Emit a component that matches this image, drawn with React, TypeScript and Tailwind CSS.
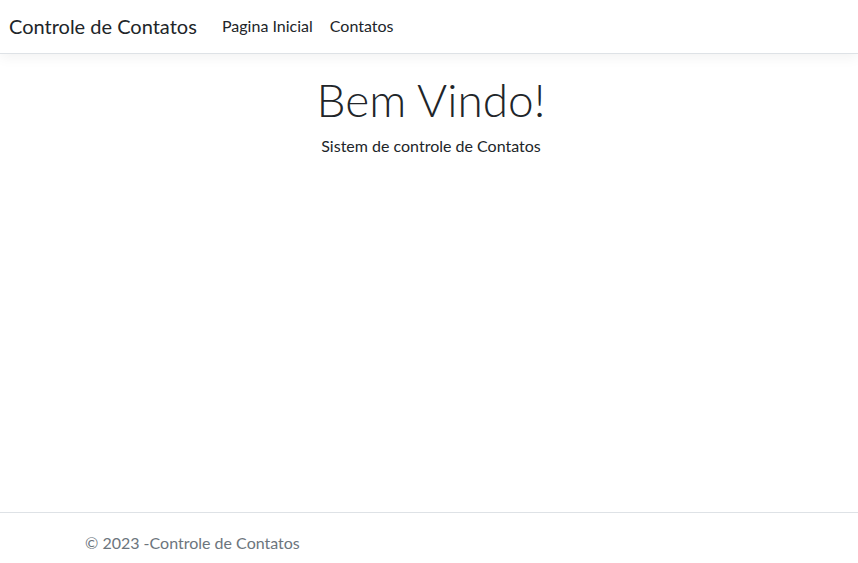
export default function App() {
  return (
    <div
      className="min-h-screen flex flex-col bg-white text-[#212529]"
      style={{ fontFamily: "Lato, 'Open Sans', sans-serif" }}
    >
      <header className="h-[54px] border-b border-[#dee2e6] shadow-[0_4px_12px_rgba(0,0,0,0.05)] flex items-center pl-[9px] pb-[2px]">
        <a href="#" className="text-[20px] text-[#212529] w-[213px] shrink-0">
          Controle de Contatos
        </a>
        <nav className="flex items-center gap-[17px]">
          <a href="#" className="text-[16px] text-[#212529]">
            Pagina Inicial
          </a>
          <a href="#" className="text-[16px] text-[#212529]">
            Contatos
          </a>
        </nav>
      </header>

      <main className="flex-1 flex flex-col items-center pt-[18px]">
        <h1 className="text-[46px] font-light leading-[1.2] pl-[4px]">Bem Vindo!</h1>
        <p className="text-[16px] mt-[7px] pl-[4px]">Sistem de controle de Contatos</p>
      </main>

      <footer className="h-[51px] border-t border-[#dee2e6] leading-[60px] whitespace-nowrap text-[16px] text-[#6c757d]">
        <div className="w-[720px] mx-auto px-[16px]">© 2023 -Controle de Contatos</div>
      </footer>
    </div>
  );
}
